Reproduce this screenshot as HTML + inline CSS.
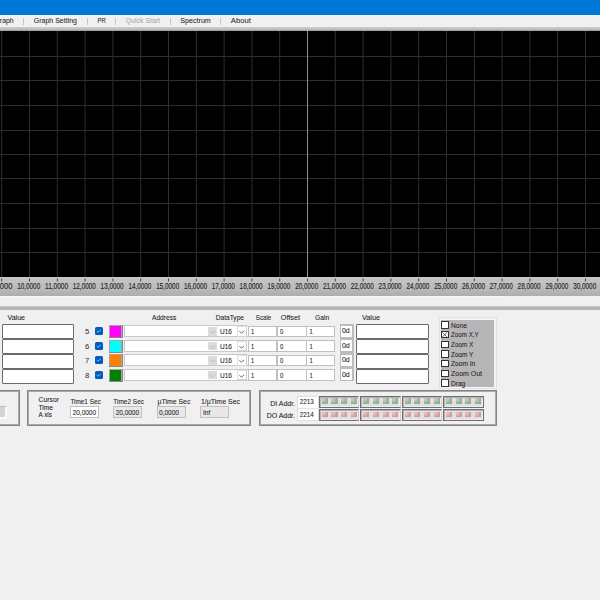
<!DOCTYPE html><html><head><meta charset='utf-8'><style>
*{margin:0;padding:0;box-sizing:border-box}
html,body{width:600px;height:600px;overflow:hidden;background:#f0f0f0;font-family:"Liberation Sans", sans-serif;}
.a{position:absolute}
.in{position:absolute;background:#fff;border:1px solid #c8c8c8}
.vb{position:absolute;background:#fff;border:1px solid #6a6a6a;border-radius:1px}
</style></head><body>
<div class='a' style='left:0;top:0;width:600px;height:15px;background:#0078d7'></div>
<div class='a' style='left:0;top:26px;width:600px;height:1px;background:#f3f3f3'></div>
<div class='a' style='left:0;top:27px;width:600px;height:4px;background:linear-gradient(#c6c6c6 0 1px,#c9c9c9 1px 2px,#b6b6b6 2px 3px,#a6a6a6 3px 4px)'></div>
<div class='a' style='left:22.8px;top:18px;width:1px;height:7px;background:#c4c4c4'></div>
<div class='a' style='left:87.0px;top:18px;width:1px;height:7px;background:#c4c4c4'></div>
<div class='a' style='left:114.8px;top:18px;width:1px;height:7px;background:#c4c4c4'></div>
<div class='a' style='left:170.0px;top:18px;width:1px;height:7px;background:#c4c4c4'></div>
<div class='a' style='left:220.0px;top:18px;width:1px;height:7px;background:#c4c4c4'></div>
<svg class='a' style='left:0;top:0' width='600' height='600'><rect x='0' y='31' width='600' height='246' fill='#000'/><defs><linearGradient id='ab' x1='0' y1='0' x2='0' y2='1'><stop offset='0' stop-color='#c6c6c6'/><stop offset='0.5' stop-color='#bdbdbd'/><stop offset='1' stop-color='#adadad'/></linearGradient></defs><rect x='0' y='277' width='600' height='19' fill='url(#ab)'/><rect x='0' y='56' width='600' height='1' fill='#2e2e2e'/><rect x='0' y='80' width='600' height='1' fill='#2e2e2e'/><rect x='0' y='105' width='600' height='1' fill='#2e2e2e'/><rect x='0' y='130' width='600' height='1' fill='#2e2e2e'/><rect x='0' y='154' width='600' height='1' fill='#2e2e2e'/><rect x='0' y='178' width='600' height='1' fill='#2e2e2e'/><rect x='0' y='203' width='600' height='1' fill='#2e2e2e'/><rect x='0' y='228' width='600' height='1' fill='#2e2e2e'/><rect x='0' y='252' width='600' height='1' fill='#2e2e2e'/><rect x='1.20' y='31' width='1' height='246' fill='#2e2e2e'/><rect x='1.20' y='278.5' width='1' height='3' fill='#4a4a4a'/><rect x='29.00' y='31' width='1' height='246' fill='#2e2e2e'/><rect x='29.00' y='278.5' width='1' height='3' fill='#4a4a4a'/><rect x='56.80' y='31' width='1' height='246' fill='#2e2e2e'/><rect x='56.80' y='278.5' width='1' height='3' fill='#4a4a4a'/><rect x='84.60' y='31' width='1' height='246' fill='#2e2e2e'/><rect x='84.60' y='278.5' width='1' height='3' fill='#4a4a4a'/><rect x='112.40' y='31' width='1' height='246' fill='#2e2e2e'/><rect x='112.40' y='278.5' width='1' height='3' fill='#4a4a4a'/><rect x='140.20' y='31' width='1' height='246' fill='#2e2e2e'/><rect x='140.20' y='278.5' width='1' height='3' fill='#4a4a4a'/><rect x='168.00' y='31' width='1' height='246' fill='#2e2e2e'/><rect x='168.00' y='278.5' width='1' height='3' fill='#4a4a4a'/><rect x='195.80' y='31' width='1' height='246' fill='#2e2e2e'/><rect x='195.80' y='278.5' width='1' height='3' fill='#4a4a4a'/><rect x='223.60' y='31' width='1' height='246' fill='#2e2e2e'/><rect x='223.60' y='278.5' width='1' height='3' fill='#4a4a4a'/><rect x='251.40' y='31' width='1' height='246' fill='#2e2e2e'/><rect x='251.40' y='278.5' width='1' height='3' fill='#4a4a4a'/><rect x='279.20' y='31' width='1' height='246' fill='#2e2e2e'/><rect x='279.20' y='278.5' width='1' height='3' fill='#4a4a4a'/><rect x='307.00' y='31' width='1' height='246' fill='#909090'/><rect x='307.00' y='278.5' width='1' height='3' fill='#4a4a4a'/><rect x='334.80' y='31' width='1' height='246' fill='#2e2e2e'/><rect x='334.80' y='278.5' width='1' height='3' fill='#4a4a4a'/><rect x='362.60' y='31' width='1' height='246' fill='#2e2e2e'/><rect x='362.60' y='278.5' width='1' height='3' fill='#4a4a4a'/><rect x='390.40' y='31' width='1' height='246' fill='#2e2e2e'/><rect x='390.40' y='278.5' width='1' height='3' fill='#4a4a4a'/><rect x='418.20' y='31' width='1' height='246' fill='#2e2e2e'/><rect x='418.20' y='278.5' width='1' height='3' fill='#4a4a4a'/><rect x='446.00' y='31' width='1' height='246' fill='#2e2e2e'/><rect x='446.00' y='278.5' width='1' height='3' fill='#4a4a4a'/><rect x='473.80' y='31' width='1' height='246' fill='#2e2e2e'/><rect x='473.80' y='278.5' width='1' height='3' fill='#4a4a4a'/><rect x='501.60' y='31' width='1' height='246' fill='#2e2e2e'/><rect x='501.60' y='278.5' width='1' height='3' fill='#4a4a4a'/><rect x='529.40' y='31' width='1' height='246' fill='#2e2e2e'/><rect x='529.40' y='278.5' width='1' height='3' fill='#4a4a4a'/><rect x='557.20' y='31' width='1' height='246' fill='#2e2e2e'/><rect x='557.20' y='278.5' width='1' height='3' fill='#4a4a4a'/><rect x='585.00' y='31' width='1' height='246' fill='#2e2e2e'/><rect x='585.00' y='278.5' width='1' height='3' fill='#4a4a4a'/></svg>
<div class='a' style='left:0;top:296px;width:504px;height:1px;background:#f8f8f8'></div>
<div class='a' style='left:0;top:306px;width:600px;height:4px;background:linear-gradient(#c6c6c6 0 1px,#b6b6b6 1px)'></div>
<div class='vb' style='left:2px;top:324.00px;width:72px;height:15.2px'></div>
<div class='vb' style='left:2px;top:338.85px;width:72px;height:15.2px'></div>
<div class='vb' style='left:2px;top:353.70px;width:72px;height:15.2px'></div>
<div class='vb' style='left:2px;top:368.55px;width:72px;height:15.2px'></div>
<div class='a' style='left:94.8px;top:327.2px;width:8px;height:8px;background:#005cbf;border-radius:1.5px'><svg width='8' height='8' style='position:absolute;left:0;top:0'><path d='M1.6 4.1 L2.8 5.2 L5.8 2.9' stroke='#c4d8f4' stroke-width='0.75' fill='none'/></svg></div>
<div class='a' style='left:108.5px;top:325.0px;width:14px;height:13.3px;background:#a4a4a4;border-right:1px solid #888;border-bottom:1px solid #888'></div>
<div class='a' style='left:109.6px;top:326.0px;width:11.4px;height:11px;background:#ff00ff'></div>
<div class='a' style='left:124px;top:325.2px;width:124px;height:12px;background:#fff;border:1px solid #c8c8c8;border-right:none'></div>
<div class='a' style='left:207.9px;top:327.0px;width:9.2px;height:8.8px;background:#dcdcdc'><svg width='9' height='9' style='position:absolute;left:0;top:0;overflow:visible'><path d='M1.6 3.6 L4.6 6 L7.6 3.6' stroke='#a8a8a8' stroke-width='0.6' fill='none'/></svg></div>
<div class='a' style='left:236.5px;top:326.3px;width:10.3px;height:10.4px;background:#fff;border:1px solid #e0e0e0;border-right-color:#cccccc;border-bottom-color:#d4d4d4'><svg width='8' height='8' style='position:absolute;left:0;top:0;overflow:visible'><path d='M1.3 4.4 L3.5 6.1 L6.2 3.9' stroke='#555' stroke-width='0.85' fill='none'/></svg></div>
<div class='in' style='left:247.5px;top:325.5px;width:29.5px;height:11.5px;border-color:#c0c0c0'></div>
<div class='in' style='left:276.5px;top:325.5px;width:30px;height:11.5px;border-color:#c0c0c0'></div>
<div class='in' style='left:306px;top:325.5px;width:28.5px;height:11.5px;border-color:#c0c0c0'></div>
<div class='a' style='left:94.8px;top:341.7px;width:8px;height:8px;background:#005cbf;border-radius:1.5px'><svg width='8' height='8' style='position:absolute;left:0;top:0'><path d='M1.6 4.1 L2.8 5.2 L5.8 2.9' stroke='#c4d8f4' stroke-width='0.75' fill='none'/></svg></div>
<div class='a' style='left:108.5px;top:339.5px;width:14px;height:13.3px;background:#a4a4a4;border-right:1px solid #888;border-bottom:1px solid #888'></div>
<div class='a' style='left:109.6px;top:340.5px;width:11.4px;height:11px;background:#00ffff'></div>
<div class='a' style='left:124px;top:339.7px;width:124px;height:12px;background:#fff;border:1px solid #c8c8c8;border-right:none'></div>
<div class='a' style='left:207.9px;top:341.5px;width:9.2px;height:8.8px;background:#dcdcdc'><svg width='9' height='9' style='position:absolute;left:0;top:0;overflow:visible'><path d='M1.6 3.6 L4.6 6 L7.6 3.6' stroke='#a8a8a8' stroke-width='0.6' fill='none'/></svg></div>
<div class='a' style='left:236.5px;top:340.8px;width:10.3px;height:10.4px;background:#fff;border:1px solid #e0e0e0;border-right-color:#cccccc;border-bottom-color:#d4d4d4'><svg width='8' height='8' style='position:absolute;left:0;top:0;overflow:visible'><path d='M1.3 4.4 L3.5 6.1 L6.2 3.9' stroke='#555' stroke-width='0.85' fill='none'/></svg></div>
<div class='in' style='left:247.5px;top:340.0px;width:29.5px;height:11.5px;border-color:#c0c0c0'></div>
<div class='in' style='left:276.5px;top:340.0px;width:30px;height:11.5px;border-color:#c0c0c0'></div>
<div class='in' style='left:306px;top:340.0px;width:28.5px;height:11.5px;border-color:#c0c0c0'></div>
<div class='a' style='left:94.8px;top:356.2px;width:8px;height:8px;background:#005cbf;border-radius:1.5px'><svg width='8' height='8' style='position:absolute;left:0;top:0'><path d='M1.6 4.1 L2.8 5.2 L5.8 2.9' stroke='#c4d8f4' stroke-width='0.75' fill='none'/></svg></div>
<div class='a' style='left:108.5px;top:354.0px;width:14px;height:13.3px;background:#a4a4a4;border-right:1px solid #888;border-bottom:1px solid #888'></div>
<div class='a' style='left:109.6px;top:355.0px;width:11.4px;height:11px;background:#ff8000'></div>
<div class='a' style='left:124px;top:354.2px;width:124px;height:12px;background:#fff;border:1px solid #c8c8c8;border-right:none'></div>
<div class='a' style='left:207.9px;top:356.0px;width:9.2px;height:8.8px;background:#dcdcdc'><svg width='9' height='9' style='position:absolute;left:0;top:0;overflow:visible'><path d='M1.6 3.6 L4.6 6 L7.6 3.6' stroke='#a8a8a8' stroke-width='0.6' fill='none'/></svg></div>
<div class='a' style='left:236.5px;top:355.3px;width:10.3px;height:10.4px;background:#fff;border:1px solid #e0e0e0;border-right-color:#cccccc;border-bottom-color:#d4d4d4'><svg width='8' height='8' style='position:absolute;left:0;top:0;overflow:visible'><path d='M1.3 4.4 L3.5 6.1 L6.2 3.9' stroke='#555' stroke-width='0.85' fill='none'/></svg></div>
<div class='in' style='left:247.5px;top:354.5px;width:29.5px;height:11.5px;border-color:#c0c0c0'></div>
<div class='in' style='left:276.5px;top:354.5px;width:30px;height:11.5px;border-color:#c0c0c0'></div>
<div class='in' style='left:306px;top:354.5px;width:28.5px;height:11.5px;border-color:#c0c0c0'></div>
<div class='a' style='left:94.8px;top:370.7px;width:8px;height:8px;background:#005cbf;border-radius:1.5px'><svg width='8' height='8' style='position:absolute;left:0;top:0'><path d='M1.6 4.1 L2.8 5.2 L5.8 2.9' stroke='#c4d8f4' stroke-width='0.75' fill='none'/></svg></div>
<div class='a' style='left:108.5px;top:368.5px;width:14px;height:13.3px;background:#a4a4a4;border-right:1px solid #888;border-bottom:1px solid #888'></div>
<div class='a' style='left:109.6px;top:369.5px;width:11.4px;height:11px;background:#008000'></div>
<div class='a' style='left:124px;top:368.7px;width:124px;height:12px;background:#fff;border:1px solid #c8c8c8;border-right:none'></div>
<div class='a' style='left:207.9px;top:370.5px;width:9.2px;height:8.8px;background:#dcdcdc'><svg width='9' height='9' style='position:absolute;left:0;top:0;overflow:visible'><path d='M1.6 3.6 L4.6 6 L7.6 3.6' stroke='#a8a8a8' stroke-width='0.6' fill='none'/></svg></div>
<div class='a' style='left:236.5px;top:369.8px;width:10.3px;height:10.4px;background:#fff;border:1px solid #e0e0e0;border-right-color:#cccccc;border-bottom-color:#d4d4d4'><svg width='8' height='8' style='position:absolute;left:0;top:0;overflow:visible'><path d='M1.3 4.4 L3.5 6.1 L6.2 3.9' stroke='#555' stroke-width='0.85' fill='none'/></svg></div>
<div class='in' style='left:247.5px;top:369.0px;width:29.5px;height:11.5px;border-color:#c0c0c0'></div>
<div class='in' style='left:276.5px;top:369.0px;width:30px;height:11.5px;border-color:#c0c0c0'></div>
<div class='in' style='left:306px;top:369.0px;width:28.5px;height:11.5px;border-color:#c0c0c0'></div>
<div class='a' style='left:339.8px;top:324.4px;width:14px;height:57px;background:#bcbcbc'></div>
<div class='a' style='left:341.2px;top:325.5px;width:11px;height:11px;background:#fff'></div>
<div class='a' style='left:341.2px;top:340.0px;width:11px;height:11px;background:#fff'></div>
<div class='a' style='left:341.2px;top:354.5px;width:11px;height:11px;background:#fff'></div>
<div class='a' style='left:341.2px;top:369.0px;width:11px;height:11px;background:#fff'></div>
<div class='vb' style='left:356.3px;top:323.8px;width:72.5px;height:15px'></div>
<div class='vb' style='left:356.3px;top:338.7px;width:72.5px;height:15px'></div>
<div class='vb' style='left:356.3px;top:353.6px;width:72.5px;height:15px'></div>
<div class='vb' style='left:356.3px;top:368.5px;width:72.5px;height:15px'></div>
<div class='a' style='left:439.3px;top:317.3px;width:57.4px;height:71.4px;background:#f4f4f4;border:1px solid #e4e4e4'></div>
<div class='a' style='left:440.7px;top:319.7px;width:53.7px;height:67px;background:#b6b6b6'></div>
<div class='a' style='left:441.3px;top:321.3px;width:7.4px;height:7.4px;background:#fff;border:1px solid #333'></div>
<div class='a' style='left:441.3px;top:331.0px;width:7.4px;height:7.4px;background:#fff;border:1px solid #333'></div>
<svg class='a' style='left:441.3px;top:331.0px' width='8' height='8'><path d='M1.3 1.3 L6.1 6.1 M6.1 1.3 L1.3 6.1' stroke='#444' stroke-width='0.8'/></svg>
<div class='a' style='left:441.3px;top:340.6px;width:7.4px;height:7.4px;background:#fff;border:1px solid #333'></div>
<div class='a' style='left:441.3px;top:350.3px;width:7.4px;height:7.4px;background:#fff;border:1px solid #333'></div>
<div class='a' style='left:441.3px;top:360.0px;width:7.4px;height:7.4px;background:#fff;border:1px solid #333'></div>
<div class='a' style='left:441.3px;top:369.7px;width:7.4px;height:7.4px;background:#fff;border:1px solid #333'></div>
<div class='a' style='left:441.3px;top:379.3px;width:7.4px;height:7.4px;background:#fff;border:1px solid #333'></div>
<div class='a' style='left:-5px;top:390px;width:25px;height:36px;border:1px solid #848484;box-shadow:inset 0 0 0 1px #aaaaaa'></div>
<div class='a' style='left:0;top:406px;width:7px;height:13px;background:#d4d4d4;border-top:1px solid #bababa;border-right:2px solid #fcfcfc;border-bottom:2px solid #fcfcfc'></div>
<div class='a' style='left:27px;top:390px;width:224px;height:36px;border:1px solid #848484;box-shadow:inset 0 0 0 1px #aaaaaa'></div>
<div class='a' style='left:70px;top:406.3px;width:28.7px;height:11.4px;background:#fff;border:1px solid #c0c0c0'></div>
<div class='a' style='left:113.3px;top:406.3px;width:28.7px;height:11.4px;background:#e8e8e8;border:1px solid #c0c0c0'></div>
<div class='a' style='left:157px;top:406.3px;width:28.6px;height:11.4px;background:#e8e8e8;border:1px solid #c0c0c0'></div>
<div class='a' style='left:200px;top:406.3px;width:28.6px;height:11.4px;background:#e8e8e8;border:1px solid #c0c0c0'></div>
<div class='a' style='left:258.5px;top:390.3px;width:238.5px;height:35.69999999999999px;border:1px solid #848484;box-shadow:inset 0 0 0 1px #aaaaaa'></div>
<div class='a' style='left:297.4px;top:395.7px;width:21.5px;height:25.6px;background:#fff;border:1px solid #e0e0e0'></div>
<div class='a' style='left:298px;top:408.3px;width:20.5px;height:1px;background:#e4e4e4'></div>
<div class='a' style='left:319.0px;top:395.8px;width:40.4px;height:11.8px;background:#e0e0e0;border:1px solid #6e6e6e;border-right-color:#d0d0d0;box-shadow:inset 1px 1px 0 #b4b4b4, inset -1px -1px 0 #eeeeee'></div>
<div class='a' style='left:321.7px;top:398.3px;width:6.2px;height:5.5px;background:radial-gradient(circle at 25% 25%, #c4d4c0 0, #96b092 60%)'></div>
<div class='a' style='left:331.4px;top:398.3px;width:6.2px;height:5.5px;background:radial-gradient(circle at 25% 25%, #c4d4c0 0, #96b092 60%)'></div>
<div class='a' style='left:341.1px;top:398.3px;width:6.2px;height:5.5px;background:radial-gradient(circle at 25% 25%, #c4d4c0 0, #96b092 60%)'></div>
<div class='a' style='left:350.8px;top:398.3px;width:6.2px;height:5.5px;background:radial-gradient(circle at 25% 25%, #c4d4c0 0, #96b092 60%)'></div>
<div class='a' style='left:319.0px;top:409px;width:40.4px;height:11.8px;background:#e0e0e0;border:1px solid #6e6e6e;border-right-color:#d0d0d0;box-shadow:inset 1px 1px 0 #b4b4b4, inset -1px -1px 0 #eeeeee'></div>
<div class='a' style='left:321.7px;top:411.5px;width:6.2px;height:5.5px;background:radial-gradient(circle at 25% 25%, #ecc8ca 0, #d49ca0 60%)'></div>
<div class='a' style='left:331.4px;top:411.5px;width:6.2px;height:5.5px;background:radial-gradient(circle at 25% 25%, #ecc8ca 0, #d49ca0 60%)'></div>
<div class='a' style='left:341.1px;top:411.5px;width:6.2px;height:5.5px;background:radial-gradient(circle at 25% 25%, #ecc8ca 0, #d49ca0 60%)'></div>
<div class='a' style='left:350.8px;top:411.5px;width:6.2px;height:5.5px;background:radial-gradient(circle at 25% 25%, #ecc8ca 0, #d49ca0 60%)'></div>
<div class='a' style='left:360.4px;top:395.8px;width:40.4px;height:11.8px;background:#e0e0e0;border:1px solid #6e6e6e;border-right-color:#d0d0d0;box-shadow:inset 1px 1px 0 #b4b4b4, inset -1px -1px 0 #eeeeee'></div>
<div class='a' style='left:363.1px;top:398.3px;width:6.2px;height:5.5px;background:radial-gradient(circle at 25% 25%, #c4d4c0 0, #96b092 60%)'></div>
<div class='a' style='left:372.8px;top:398.3px;width:6.2px;height:5.5px;background:radial-gradient(circle at 25% 25%, #c4d4c0 0, #96b092 60%)'></div>
<div class='a' style='left:382.5px;top:398.3px;width:6.2px;height:5.5px;background:radial-gradient(circle at 25% 25%, #c4d4c0 0, #96b092 60%)'></div>
<div class='a' style='left:392.2px;top:398.3px;width:6.2px;height:5.5px;background:radial-gradient(circle at 25% 25%, #c4d4c0 0, #96b092 60%)'></div>
<div class='a' style='left:360.4px;top:409px;width:40.4px;height:11.8px;background:#e0e0e0;border:1px solid #6e6e6e;border-right-color:#d0d0d0;box-shadow:inset 1px 1px 0 #b4b4b4, inset -1px -1px 0 #eeeeee'></div>
<div class='a' style='left:363.1px;top:411.5px;width:6.2px;height:5.5px;background:radial-gradient(circle at 25% 25%, #ecc8ca 0, #d49ca0 60%)'></div>
<div class='a' style='left:372.8px;top:411.5px;width:6.2px;height:5.5px;background:radial-gradient(circle at 25% 25%, #ecc8ca 0, #d49ca0 60%)'></div>
<div class='a' style='left:382.5px;top:411.5px;width:6.2px;height:5.5px;background:radial-gradient(circle at 25% 25%, #ecc8ca 0, #d49ca0 60%)'></div>
<div class='a' style='left:392.2px;top:411.5px;width:6.2px;height:5.5px;background:radial-gradient(circle at 25% 25%, #ecc8ca 0, #d49ca0 60%)'></div>
<div class='a' style='left:401.8px;top:395.8px;width:40.4px;height:11.8px;background:#e0e0e0;border:1px solid #6e6e6e;border-right-color:#d0d0d0;box-shadow:inset 1px 1px 0 #b4b4b4, inset -1px -1px 0 #eeeeee'></div>
<div class='a' style='left:404.5px;top:398.3px;width:6.2px;height:5.5px;background:radial-gradient(circle at 25% 25%, #c4d4c0 0, #96b092 60%)'></div>
<div class='a' style='left:414.2px;top:398.3px;width:6.2px;height:5.5px;background:radial-gradient(circle at 25% 25%, #c4d4c0 0, #96b092 60%)'></div>
<div class='a' style='left:423.9px;top:398.3px;width:6.2px;height:5.5px;background:radial-gradient(circle at 25% 25%, #c4d4c0 0, #96b092 60%)'></div>
<div class='a' style='left:433.6px;top:398.3px;width:6.2px;height:5.5px;background:radial-gradient(circle at 25% 25%, #c4d4c0 0, #96b092 60%)'></div>
<div class='a' style='left:401.8px;top:409px;width:40.4px;height:11.8px;background:#e0e0e0;border:1px solid #6e6e6e;border-right-color:#d0d0d0;box-shadow:inset 1px 1px 0 #b4b4b4, inset -1px -1px 0 #eeeeee'></div>
<div class='a' style='left:404.5px;top:411.5px;width:6.2px;height:5.5px;background:radial-gradient(circle at 25% 25%, #ecc8ca 0, #d49ca0 60%)'></div>
<div class='a' style='left:414.2px;top:411.5px;width:6.2px;height:5.5px;background:radial-gradient(circle at 25% 25%, #ecc8ca 0, #d49ca0 60%)'></div>
<div class='a' style='left:423.9px;top:411.5px;width:6.2px;height:5.5px;background:radial-gradient(circle at 25% 25%, #ecc8ca 0, #d49ca0 60%)'></div>
<div class='a' style='left:433.6px;top:411.5px;width:6.2px;height:5.5px;background:radial-gradient(circle at 25% 25%, #ecc8ca 0, #d49ca0 60%)'></div>
<div class='a' style='left:443.2px;top:395.8px;width:40.4px;height:11.8px;background:#e0e0e0;border:1px solid #6e6e6e;border-right-color:#6e6e6e;box-shadow:inset 1px 1px 0 #b4b4b4, inset -1px -1px 0 #eeeeee'></div>
<div class='a' style='left:445.9px;top:398.3px;width:6.2px;height:5.5px;background:radial-gradient(circle at 25% 25%, #c4d4c0 0, #96b092 60%)'></div>
<div class='a' style='left:455.6px;top:398.3px;width:6.2px;height:5.5px;background:radial-gradient(circle at 25% 25%, #c4d4c0 0, #96b092 60%)'></div>
<div class='a' style='left:465.3px;top:398.3px;width:6.2px;height:5.5px;background:radial-gradient(circle at 25% 25%, #c4d4c0 0, #96b092 60%)'></div>
<div class='a' style='left:475.0px;top:398.3px;width:6.2px;height:5.5px;background:radial-gradient(circle at 25% 25%, #c4d4c0 0, #96b092 60%)'></div>
<div class='a' style='left:443.2px;top:409px;width:40.4px;height:11.8px;background:#e0e0e0;border:1px solid #6e6e6e;border-right-color:#6e6e6e;box-shadow:inset 1px 1px 0 #b4b4b4, inset -1px -1px 0 #eeeeee'></div>
<div class='a' style='left:445.9px;top:411.5px;width:6.2px;height:5.5px;background:radial-gradient(circle at 25% 25%, #ecc8ca 0, #d49ca0 60%)'></div>
<div class='a' style='left:455.6px;top:411.5px;width:6.2px;height:5.5px;background:radial-gradient(circle at 25% 25%, #ecc8ca 0, #d49ca0 60%)'></div>
<div class='a' style='left:465.3px;top:411.5px;width:6.2px;height:5.5px;background:radial-gradient(circle at 25% 25%, #ecc8ca 0, #d49ca0 60%)'></div>
<div class='a' style='left:475.0px;top:411.5px;width:6.2px;height:5.5px;background:radial-gradient(circle at 25% 25%, #ecc8ca 0, #d49ca0 60%)'></div>
<svg class='a' style='left:0;top:0' width='600' height='600' font-family='Liberation Sans'><text x='-5.50' y='22.60' font-size='7.5' fill='#1e1e1e' stroke='#1e1e1e' stroke-width='0.05' textLength='19.20' lengthAdjust='spacingAndGlyphs'>Graph</text><text x='33.80' y='22.60' font-size='7.5' fill='#1e1e1e' stroke='#1e1e1e' stroke-width='0.05' textLength='43.20' lengthAdjust='spacingAndGlyphs'>Graph Setting</text><text x='97.50' y='22.60' font-size='7.5' fill='#1e1e1e' stroke='#1e1e1e' stroke-width='0.05' textLength='8.30' lengthAdjust='spacingAndGlyphs'>PR</text><text x='125.80' y='22.60' font-size='7.5' fill='#a8a8a8' stroke='#a8a8a8' stroke-width='0.05' textLength='34.20' lengthAdjust='spacingAndGlyphs'>Quick Start</text><text x='180.30' y='22.60' font-size='7.5' fill='#1e1e1e' stroke='#1e1e1e' stroke-width='0.05' textLength='30.50' lengthAdjust='spacingAndGlyphs'>Spectrum</text><text x='230.80' y='22.60' font-size='7.5' fill='#1e1e1e' stroke='#1e1e1e' stroke-width='0.05' textLength='20.00' lengthAdjust='spacingAndGlyphs'>About</text><text x='-10.60' y='289.00' font-size='8.2' fill='#262626' stroke='#262626' stroke-width='0.14' textLength='23.00' lengthAdjust='spacingAndGlyphs'>9,0000</text><text x='17.20' y='289.00' font-size='8.2' fill='#262626' stroke='#262626' stroke-width='0.14' textLength='23.00' lengthAdjust='spacingAndGlyphs'>10,0000</text><text x='45.00' y='289.00' font-size='8.2' fill='#262626' stroke='#262626' stroke-width='0.14' textLength='23.00' lengthAdjust='spacingAndGlyphs'>11,0000</text><text x='72.80' y='289.00' font-size='8.2' fill='#262626' stroke='#262626' stroke-width='0.14' textLength='23.00' lengthAdjust='spacingAndGlyphs'>12,0000</text><text x='100.60' y='289.00' font-size='8.2' fill='#262626' stroke='#262626' stroke-width='0.14' textLength='23.00' lengthAdjust='spacingAndGlyphs'>13,0000</text><text x='128.40' y='289.00' font-size='8.2' fill='#262626' stroke='#262626' stroke-width='0.14' textLength='23.00' lengthAdjust='spacingAndGlyphs'>14,0000</text><text x='156.20' y='289.00' font-size='8.2' fill='#262626' stroke='#262626' stroke-width='0.14' textLength='23.00' lengthAdjust='spacingAndGlyphs'>15,0000</text><text x='184.00' y='289.00' font-size='8.2' fill='#262626' stroke='#262626' stroke-width='0.14' textLength='23.00' lengthAdjust='spacingAndGlyphs'>16,0000</text><text x='211.80' y='289.00' font-size='8.2' fill='#262626' stroke='#262626' stroke-width='0.14' textLength='23.00' lengthAdjust='spacingAndGlyphs'>17,0000</text><text x='239.60' y='289.00' font-size='8.2' fill='#262626' stroke='#262626' stroke-width='0.14' textLength='23.00' lengthAdjust='spacingAndGlyphs'>18,0000</text><text x='267.40' y='289.00' font-size='8.2' fill='#262626' stroke='#262626' stroke-width='0.14' textLength='23.00' lengthAdjust='spacingAndGlyphs'>19,0000</text><text x='295.20' y='289.00' font-size='8.2' fill='#262626' stroke='#262626' stroke-width='0.14' textLength='23.00' lengthAdjust='spacingAndGlyphs'>20,0000</text><text x='323.00' y='289.00' font-size='8.2' fill='#262626' stroke='#262626' stroke-width='0.14' textLength='23.00' lengthAdjust='spacingAndGlyphs'>21,0000</text><text x='350.80' y='289.00' font-size='8.2' fill='#262626' stroke='#262626' stroke-width='0.14' textLength='23.00' lengthAdjust='spacingAndGlyphs'>22,0000</text><text x='378.60' y='289.00' font-size='8.2' fill='#262626' stroke='#262626' stroke-width='0.14' textLength='23.00' lengthAdjust='spacingAndGlyphs'>23,0000</text><text x='406.40' y='289.00' font-size='8.2' fill='#262626' stroke='#262626' stroke-width='0.14' textLength='23.00' lengthAdjust='spacingAndGlyphs'>24,0000</text><text x='434.20' y='289.00' font-size='8.2' fill='#262626' stroke='#262626' stroke-width='0.14' textLength='23.00' lengthAdjust='spacingAndGlyphs'>25,0000</text><text x='462.00' y='289.00' font-size='8.2' fill='#262626' stroke='#262626' stroke-width='0.14' textLength='23.00' lengthAdjust='spacingAndGlyphs'>26,0000</text><text x='489.80' y='289.00' font-size='8.2' fill='#262626' stroke='#262626' stroke-width='0.14' textLength='23.00' lengthAdjust='spacingAndGlyphs'>27,0000</text><text x='517.60' y='289.00' font-size='8.2' fill='#262626' stroke='#262626' stroke-width='0.14' textLength='23.00' lengthAdjust='spacingAndGlyphs'>28,0000</text><text x='545.40' y='289.00' font-size='8.2' fill='#262626' stroke='#262626' stroke-width='0.14' textLength='23.00' lengthAdjust='spacingAndGlyphs'>29,0000</text><text x='573.20' y='289.00' font-size='8.2' fill='#262626' stroke='#262626' stroke-width='0.14' textLength='23.00' lengthAdjust='spacingAndGlyphs'>30,0000</text><text x='7.50' y='320.40' font-size='7' fill='#1e1e1e' stroke='#1e1e1e' stroke-width='0.08' textLength='17.50' lengthAdjust='spacingAndGlyphs'>Value</text><text x='152.00' y='320.40' font-size='7' fill='#1e1e1e' stroke='#1e1e1e' stroke-width='0.08' textLength='24.30' lengthAdjust='spacingAndGlyphs'>Address</text><text x='215.80' y='320.40' font-size='7' fill='#1e1e1e' stroke='#1e1e1e' stroke-width='0.08' textLength='28.20' lengthAdjust='spacingAndGlyphs'>DataType</text><text x='255.80' y='320.40' font-size='7' fill='#1e1e1e' stroke='#1e1e1e' stroke-width='0.08' textLength='15.50' lengthAdjust='spacingAndGlyphs'>Scale</text><text x='280.80' y='320.40' font-size='7' fill='#1e1e1e' stroke='#1e1e1e' stroke-width='0.08' textLength='19.20' lengthAdjust='spacingAndGlyphs'>Offset</text><text x='315.00' y='320.40' font-size='7' fill='#1e1e1e' stroke='#1e1e1e' stroke-width='0.08' textLength='14.20' lengthAdjust='spacingAndGlyphs'>Gain</text><text x='362.00' y='320.40' font-size='7' fill='#1e1e1e' stroke='#1e1e1e' stroke-width='0.08' textLength='18.00' lengthAdjust='spacingAndGlyphs'>Value</text><text x='85.00' y='334.10' font-size='8' fill='#2a2a2a' stroke='#2a2a2a' stroke-width='0' textLength='4.30' lengthAdjust='spacingAndGlyphs'>5</text><text x='220.00' y='334.10' font-size='7' fill='#1e1e1e' stroke='#1e1e1e' stroke-width='0.08' textLength='12.00' lengthAdjust='spacingAndGlyphs'>U16</text><text x='251.00' y='334.10' font-size='7' fill='#1e1e1e' stroke='#1e1e1e' stroke-width='0.08' textLength='3.30' lengthAdjust='spacingAndGlyphs'>1</text><text x='280.00' y='334.10' font-size='7' fill='#1e1e1e' stroke='#1e1e1e' stroke-width='0.08' textLength='3.30' lengthAdjust='spacingAndGlyphs'>0</text><text x='309.50' y='334.10' font-size='7' fill='#1e1e1e' stroke='#1e1e1e' stroke-width='0.08' textLength='3.30' lengthAdjust='spacingAndGlyphs'>1</text><text x='85.00' y='348.60' font-size='8' fill='#2a2a2a' stroke='#2a2a2a' stroke-width='0' textLength='4.30' lengthAdjust='spacingAndGlyphs'>6</text><text x='220.00' y='348.60' font-size='7' fill='#1e1e1e' stroke='#1e1e1e' stroke-width='0.08' textLength='12.00' lengthAdjust='spacingAndGlyphs'>U16</text><text x='251.00' y='348.60' font-size='7' fill='#1e1e1e' stroke='#1e1e1e' stroke-width='0.08' textLength='3.30' lengthAdjust='spacingAndGlyphs'>1</text><text x='280.00' y='348.60' font-size='7' fill='#1e1e1e' stroke='#1e1e1e' stroke-width='0.08' textLength='3.30' lengthAdjust='spacingAndGlyphs'>0</text><text x='309.50' y='348.60' font-size='7' fill='#1e1e1e' stroke='#1e1e1e' stroke-width='0.08' textLength='3.30' lengthAdjust='spacingAndGlyphs'>1</text><text x='85.00' y='363.10' font-size='8' fill='#2a2a2a' stroke='#2a2a2a' stroke-width='0' textLength='4.30' lengthAdjust='spacingAndGlyphs'>7</text><text x='220.00' y='363.10' font-size='7' fill='#1e1e1e' stroke='#1e1e1e' stroke-width='0.08' textLength='12.00' lengthAdjust='spacingAndGlyphs'>U16</text><text x='251.00' y='363.10' font-size='7' fill='#1e1e1e' stroke='#1e1e1e' stroke-width='0.08' textLength='3.30' lengthAdjust='spacingAndGlyphs'>1</text><text x='280.00' y='363.10' font-size='7' fill='#1e1e1e' stroke='#1e1e1e' stroke-width='0.08' textLength='3.30' lengthAdjust='spacingAndGlyphs'>0</text><text x='309.50' y='363.10' font-size='7' fill='#1e1e1e' stroke='#1e1e1e' stroke-width='0.08' textLength='3.30' lengthAdjust='spacingAndGlyphs'>1</text><text x='85.00' y='377.60' font-size='8' fill='#2a2a2a' stroke='#2a2a2a' stroke-width='0' textLength='4.30' lengthAdjust='spacingAndGlyphs'>8</text><text x='220.00' y='377.60' font-size='7' fill='#1e1e1e' stroke='#1e1e1e' stroke-width='0.08' textLength='12.00' lengthAdjust='spacingAndGlyphs'>U16</text><text x='251.00' y='377.60' font-size='7' fill='#1e1e1e' stroke='#1e1e1e' stroke-width='0.08' textLength='3.30' lengthAdjust='spacingAndGlyphs'>1</text><text x='280.00' y='377.60' font-size='7' fill='#1e1e1e' stroke='#1e1e1e' stroke-width='0.08' textLength='3.30' lengthAdjust='spacingAndGlyphs'>0</text><text x='309.50' y='377.60' font-size='7' fill='#1e1e1e' stroke='#1e1e1e' stroke-width='0.08' textLength='3.30' lengthAdjust='spacingAndGlyphs'>1</text><text x='341.90' y='333.00' font-size='7' fill='#1e1e1e' stroke='#1e1e1e' stroke-width='0.08' textLength='7.85' lengthAdjust='spacingAndGlyphs'>0d</text><text x='341.90' y='347.50' font-size='7' fill='#1e1e1e' stroke='#1e1e1e' stroke-width='0.08' textLength='7.85' lengthAdjust='spacingAndGlyphs'>0d</text><text x='341.90' y='362.00' font-size='7' fill='#1e1e1e' stroke='#1e1e1e' stroke-width='0.08' textLength='7.85' lengthAdjust='spacingAndGlyphs'>0d</text><text x='341.90' y='376.50' font-size='7' fill='#1e1e1e' stroke='#1e1e1e' stroke-width='0.08' textLength='7.85' lengthAdjust='spacingAndGlyphs'>0d</text><text x='451.00' y='327.70' font-size='7' fill='#2a2030' stroke='#2a2030' stroke-width='0.08' textLength='16.00' lengthAdjust='spacingAndGlyphs'>None</text><text x='451.00' y='337.37' font-size='7' fill='#2a2030' stroke='#2a2030' stroke-width='0.08' textLength='27.70' lengthAdjust='spacingAndGlyphs'>Zoom X,Y</text><text x='451.00' y='347.04' font-size='7' fill='#2a2030' stroke='#2a2030' stroke-width='0.08' textLength='22.30' lengthAdjust='spacingAndGlyphs'>Zoom X</text><text x='451.00' y='356.71' font-size='7' fill='#2a2030' stroke='#2a2030' stroke-width='0.08' textLength='22.30' lengthAdjust='spacingAndGlyphs'>Zoom Y</text><text x='451.00' y='366.38' font-size='7' fill='#2a2030' stroke='#2a2030' stroke-width='0.08' textLength='24.30' lengthAdjust='spacingAndGlyphs'>Zoom In</text><text x='451.00' y='376.05' font-size='7' fill='#2a2030' stroke='#2a2030' stroke-width='0.08' textLength='31.00' lengthAdjust='spacingAndGlyphs'>Zoom Out</text><text x='451.00' y='385.72' font-size='7' fill='#2a2030' stroke='#2a2030' stroke-width='0.08' textLength='14.30' lengthAdjust='spacingAndGlyphs'>Drag</text><text x='38.50' y='401.50' font-size='7' fill='#1e1e1e' stroke='#1e1e1e' stroke-width='0.08' textLength='20.50' lengthAdjust='spacingAndGlyphs'>Cursor</text><text x='38.50' y='409.50' font-size='7' fill='#1e1e1e' stroke='#1e1e1e' stroke-width='0.08' textLength='14.50' lengthAdjust='spacingAndGlyphs'>Time</text><text x='38.50' y='417.00' font-size='7' fill='#1e1e1e' stroke='#1e1e1e' stroke-width='0.08' textLength='13.50' lengthAdjust='spacingAndGlyphs'>A xis</text><text x='70.40' y='403.70' font-size='7' fill='#1e1e1e' stroke='#1e1e1e' stroke-width='0.08' textLength='30.30' lengthAdjust='spacingAndGlyphs'>Time1 Sec</text><text x='113.30' y='403.70' font-size='7' fill='#1e1e1e' stroke='#1e1e1e' stroke-width='0.08' textLength='30.70' lengthAdjust='spacingAndGlyphs'>Time2 Sec</text><text x='157.60' y='403.70' font-size='7' fill='#1e1e1e' stroke='#1e1e1e' stroke-width='0.08' textLength='32.80' lengthAdjust='spacingAndGlyphs'>µTime Sec</text><text x='201.00' y='403.70' font-size='7' fill='#1e1e1e' stroke='#1e1e1e' stroke-width='0.08' textLength='39.00' lengthAdjust='spacingAndGlyphs'>1/µTime Sec</text><text x='72.70' y='415.00' font-size='7' fill='#1e1e1e' stroke='#1e1e1e' stroke-width='0.08' textLength='23.30' lengthAdjust='spacingAndGlyphs'>20,0000</text><text x='115.70' y='415.00' font-size='7' fill='#1e1e1e' stroke='#1e1e1e' stroke-width='0.08' textLength='23.30' lengthAdjust='spacingAndGlyphs'>20,0000</text><text x='159.00' y='415.00' font-size='7' fill='#1e1e1e' stroke='#1e1e1e' stroke-width='0.08' textLength='20.00' lengthAdjust='spacingAndGlyphs'>0,0000</text><text x='203.00' y='415.00' font-size='7' fill='#1e1e1e' stroke='#1e1e1e' stroke-width='0.08' textLength='7.40' lengthAdjust='spacingAndGlyphs'>Inf</text><text x='270.30' y='405.70' font-size='7' fill='#1e1e1e' stroke='#1e1e1e' stroke-width='0.08' textLength='24.70' lengthAdjust='spacingAndGlyphs'>DI Addr.</text><text x='266.70' y='417.60' font-size='7' fill='#1e1e1e' stroke='#1e1e1e' stroke-width='0.08' textLength='28.30' lengthAdjust='spacingAndGlyphs'>DO Addr.</text><text x='299.70' y='403.70' font-size='7' fill='#1e1e1e' stroke='#1e1e1e' stroke-width='0.08' textLength='14.00' lengthAdjust='spacingAndGlyphs'>2213</text><text x='299.70' y='417.00' font-size='7' fill='#1e1e1e' stroke='#1e1e1e' stroke-width='0.08' textLength='14.00' lengthAdjust='spacingAndGlyphs'>2214</text></svg>
</body></html>
